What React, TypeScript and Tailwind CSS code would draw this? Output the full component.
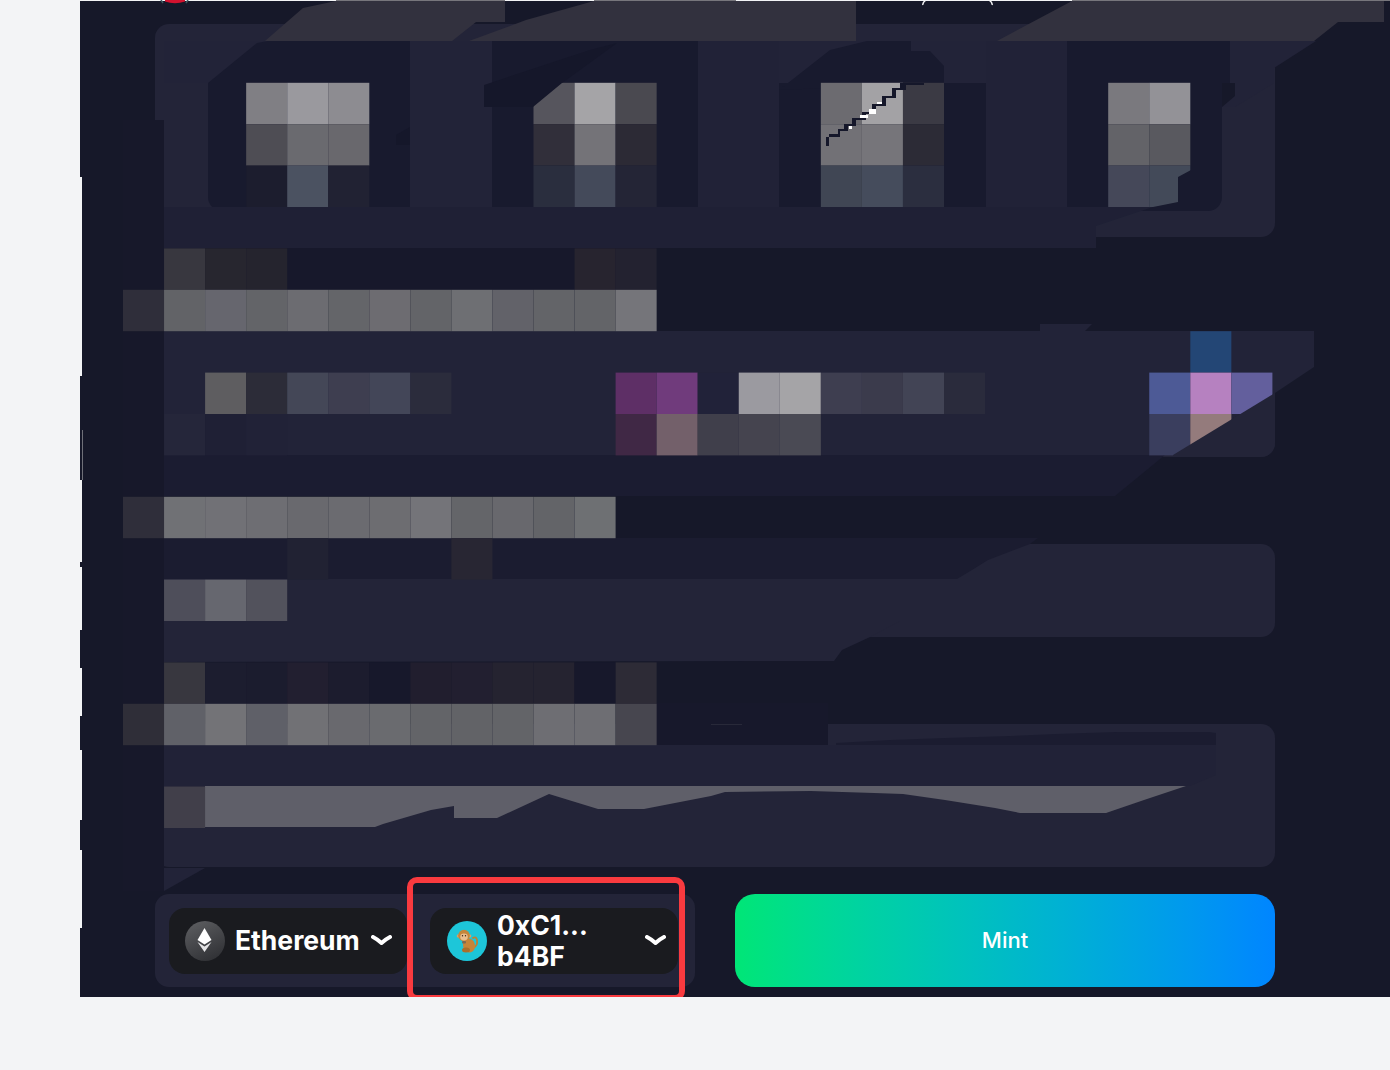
import React from "react";

const X = (i: number) => 123 + 41.05 * i;
const Y = (k: number) => 41.4 * k;

// [row, first column, ...colours]; null leaves the cell out
const rows: [number, number, ...(string | null)[]][] = [
  [2, 3, "#807f84", "#9a999e", "#8d8c91"],
  [3, 3, "#4e4d54", "#6a6a6f", "#69686d"],
  [4, 3, "#1c1d2e", "#4b5261", "#212233"],
  [2, 10, "#56555d", "#a5a4a7", "#4a4950"],
  [3, 10, "#312f3a", "#747378", "#2c2a35"],
  [4, 10, "#2a2e3e", "#444a5a", "#242536"],
  [2, 17, "#6c6b70", "#a3a2a5", "#3b3a44"],
  [3, 17, "#727176", "#76757a", "#2c2b36"],
  [4, 17, "#404654", "#454c5c", "#2b2e3f"],
  [2, 24, "#7a797e", "#939297"],
  [3, 24, "#636368", "#59595f"],
  [4, 24, "#454859", "#434a59"],
  [6, 1, "#38373f", "#27262f", "#25242e", null, null, null, null, null, null, null, "#27242f", "#232230"],
  [7, 0, "#2f2e3a", "#626367", "#66666e", "#636468", "#6c6c71", "#646569", "#6d6c71", "#636468", "#6e6f73", "#626269", "#636468", "#636468", "#75757a"],
  [8, 26, "#234675"],
  [9, 2, "#5e5d60", "#2c2c38", "#444757", "#3e3e50", "#434658", "#2b2c3c", null, null, null, null, "#5e2f66", "#703b7c", "#212239", "#9b9aa0", "#a5a4a7", "#3e3e50", "#3b3b4c", "#424455", "#2a2b3c"],
  [9, 25, "#4d5a96", "#b681c0", "#635f9d"],
  [10, 1, "#25263a", "#1f2035", "#212237", null, null, null, null, null, null, null, null, "#402845", "#73606a", "#403f4b", "#45444f", "#4a4a54"],
  [10, 25, "#3a3e5e", "#947b7c"],
  [12, 0, "#2f2e3a", "#707175", "#717176", "#6e6e73", "#69696e", "#6b6b70", "#6d6d71", "#747479", "#646569", "#68686d", "#636468", "#6e7073"],
  [13, 4, "#212233", null, null, null, "#282633"],
  [14, 1, "#4e4e5a", "#66676f", "#52525c"],
  [16, 1, "#38373f", "#1c1d2f", "#1b1c2e", "#221f30", "#1c1c2e", "#17182b", "#211e2e", "#221f30", "#252330", "#252330", "#17182b", "#2d2b36"],
  [17, 0, "#2f2e38", "#606168", "#737377", "#5f6068", "#717175", "#69696e", "#6a6b6f", "#636468", "#626367", "#636468", "#6e6e73", "#6e6e73", "#47464f"],
  [19, 1, "#413f4a"],
];

const Mosaic = () => (
  <svg className="absolute left-0 top-0 pointer-events-none" width={1310} height={997} viewBox="80 0 1310 997">
    {/* cut-off top of the page */}
    <rect x="80" y="0" width="1310" height="1" fill="#f3f4f6" />
    <rect x="336" y="0" width="169" height="1" fill="#77767c" />
    <rect x="594" y="0" width="142" height="1" fill="#77767c" />
    <rect x="1072" y="0" width="318" height="1" fill="#77767c" />
    <path d="M165 1.5 Q175 5 185 1.5 L185 0 L165 0 Z" fill="#d3122f" />
    <path d="M161 0 L163 3 M188 0 L186 3" stroke="#3d5a62" strokeWidth="1.5" />
    <path d="M926 0 Q922 3 923 5 M989 0 Q993 3 992 5" stroke="#f3f4f6" strokeWidth="1.5" fill="none" />
    <rect x="808" y="0" width="2" height="2" fill="#f3f4f6" />

    {/* panel's left edge showing through */}
    {[[177, 199], [480, 82], [567, 63], [668, 48], [750, 70], [850, 78]].map(([y, h]) => (
      <rect key={y} x="80" y={y} width="2" height={h} fill="#f3f4f6" />
    ))}
    <rect x="82" y="430" width="1" height="50" fill="#6f7079" />

    {/* band of row one and the left column */}
    <polygon points="257,41 1316,41 1274,68 1274,83 1235,107 1222,107 1222,83 164,83 164,41" fill="#222338" />
    <polygon points="257,43 268,41 410,41 410,83 208,83" fill="#181a2e" />
    <rect x="492" y="41" width="206" height="42" fill="#181a2e" />
    <rect x="1067" y="41" width="163" height="42" fill="#181a2e" />
    <polygon points="779,90 830,50 867,41 911,41 911,51 930,51 944,66 944,83" fill="#181a2e" />
    <polygon points="1222,83 1235,83 1235,96 1222,107" fill="#161829" />
    <rect x="410" y="41" width="82" height="166" fill="#222338" />
    <rect x="698" y="41" width="81" height="166" fill="#212237" />
    <rect x="986" y="41" width="81" height="166" fill="#212237" />
    <rect x="123" y="120" width="41" height="771" fill="#17182a" />

    {/* top band */}
    <polygon points="265,41 303,8 336,1 505,1 505,22 476,22 452,41" fill="#32313e" />
    <polygon points="469,41 526,20 594,1 856,1 856,41" fill="#32313e" />
    <polygon points="997,41 1072,1 1384,1 1384,22 1338,22 1314,41" fill="#32313e" />

    {/* flat bands */}
    <polygon points="164,207 1153,207 1096,226 1096,248 164,248" fill="#1f2035" />
    <rect x="164" y="248" width="492" height="42" fill="#17182b" />
    <polygon points="164,331 1040,331 1040,324 1092,324 1085,331 1314,331 1314,367 1275,393 1173,455 164,457" fill="#222338" />
    <polygon points="164,455 1165,455 1115,496 164,496" fill="#1b1c31" />
    <polygon points="164,538 1038,538 1030,544 988,560 972,570 957,579 164,579" fill="#1b1c30" />
    <polygon points="164,621 900,621 870,637 842,650 834,661 164,662" fill="#232438" />
    <rect x="656" y="703" width="172" height="42" fill="#17182b" />
    <rect x="711" y="724" width="31" height="1" fill="#282939" />
    <polygon points="836,745 836,743 891,740 945,738 1010,736 1056,734 1117,732 1209,732 1216,733 1216,745" fill="#1b1c30" />
    <polygon points="164,745 1216,745 1216,775 1190,786 164,786" fill="#212237" />
    <polygon points="205,786 1186,786 1144,800 1106,813 1020,813 995,808 945,800 903,794 874,793 811,791 725,792 711,796 644,809 598,809 549,794 497,818 454,818 454,806 431,810 383,824 375,827 205,827" fill="#5f5f69" />
    <polygon points="164,868 205,868 164,891" fill="#222338" />

    {/* cells */}
    {rows.map(([k, first, ...colours]) =>
      colours.map((c, n) =>
        c ? (
          <rect key={`${k}-${first + n}`} x={X(first + n)} y={Y(k)} width={41.05} height={41.4} fill={c} />
        ) : null
      )
    )}

    {/* diagonal tears */}
    <polygon points="484,87 484,107 533,107 562,83 617,43 590,50 484,85" fill="#15172a" />
    <polygon points="396,145 396,135 410,127 410,145" fill="#15172a" />
    <polygon points="1191,170 1178,177 1178,202 1153,207 1191,207" fill="#181a2e" />
    <path d="M1275 393 L1173 455 L1173 457 L1261 457 A14 14 0 0 0 1275 443 Z" fill="#232438" />
    <path d="M826 146 V137 H840 V131 H848 V126 H856 V120 H866 V114 H876 V106 H886 V98 H896 V90 H906 V85 H924 V83 H900 V88 H892 V96 H882 V104 H872 V112 H862 V118 H852 V124 H844 V129 H838 V134 H829 V146 Z" fill="#15172a" />
    <rect x="849" y="126" width="3" height="3" fill="#ffffff" />
    <rect x="860" y="115" width="8" height="3" fill="#ffffff" />
    <rect x="869" y="109" width="7" height="5" fill="#ffffff" />
    <rect x="877" y="102" width="5" height="2" fill="#ffffff" />
  </svg>
);

const Chevron = () => (
  <svg width="21" height="11" viewBox="0 0 21 11" className="shrink-0">
    <path d="M2 2 Q6 4 10.500 8 Q15 4 19 2" fill="none" stroke="#ffffff" strokeWidth="4" strokeLinecap="round" strokeLinejoin="round" />
  </svg>
);

const EthIcon = () => (
  <svg width="40" height="40" viewBox="0 0 40 40" className="shrink-0">
    <defs>
      <linearGradient id="eth" x1="0.2" y1="0" x2="0.7" y2="1">
        <stop offset="0" stopColor="#5c5d60" />
        <stop offset="1" stopColor="#303135" />
      </linearGradient>
    </defs>
    <circle cx="20" cy="20" r="20" fill="url(#eth)" />
    <polygon points="19.500,7 26.500,19 19.500,23.500 12.500,19" fill="#ffffff" />
    <polygon points="12.500,21 19.500,25.500 26.500,21 19.500,31" fill="#e4e4e6" />
  </svg>
);

const MonkeyIcon = () => (
  <svg width="40" height="40" viewBox="0 0 40 40" className="shrink-0">
    <circle cx="20" cy="20" r="20" fill="#1dc6d9" />
    <path d="M26 27 Q31 25 30 19 Q29 15 26 17" fill="none" stroke="#bf7f32" strokeWidth="1.800" strokeLinecap="round" />
    <ellipse cx="22" cy="24.500" rx="6" ry="7" fill="#c5853a" transform="rotate(-15 22 24.500)" />
    <ellipse cx="19" cy="29" rx="4" ry="2.500" fill="#a96f2c" />
    <circle cx="11.500" cy="15" r="1.800" fill="#d9a066" />
    <circle cx="22.500" cy="15" r="1.800" fill="#d9a066" />
    <circle cx="17" cy="14.500" r="5.800" fill="#c5853a" />
    <ellipse cx="17" cy="16" rx="3.800" ry="3.400" fill="#e9bd8f" />
    <circle cx="15.500" cy="14.800" r="0.700" fill="#3a2412" />
    <circle cx="18.500" cy="14.800" r="0.700" fill="#3a2412" />
    <rect x="15" y="20" width="4" height="2.500" rx="1" fill="#7a6a55" />
  </svg>
);

export default function App() {
  return (
    <div className="h-[1070px] w-[1390px] overflow-hidden bg-[#f3f4f6] pl-[80px] font-['Inter',sans-serif]">
      <div className="relative h-[997px] w-[1310px] overflow-hidden bg-[#161829] pl-[75px] pt-[24px]">
        <div className="h-[213px] w-[1120px] rounded-[14px] bg-[#232438] pl-[53px] pt-[28px]">
          <div className="h-[159px] w-[1014px] rounded-[14px] bg-[#181a2e]" />
        </div>
        <div className="mt-[94px] h-[126px] w-[1120px] rounded-[14px] bg-[#232438]" />
        <div className="mt-[87px] h-[93px] w-[1120px] rounded-[14px] bg-[#232438]" />
        <div className="mt-[87px] h-[143px] w-[1120px] rounded-[14px] bg-[#232438]" />

        <Mosaic />

        <div className="relative mt-[27px] flex h-[93px] w-[1120px] gap-[40px]">
          <div className="flex h-full w-[540px] items-center gap-[23px] rounded-[14px] bg-[#232438] pl-[14px]">
            <button className="flex h-[66px] w-[238px] items-center rounded-[16px] bg-[#1a1b1f] pl-[16px] text-white">
              <EthIcon />
              <span className="ml-[10px] text-[26.500px] font-bold leading-[31px]">Ethereum</span>
              <span className="ml-[11px]">
                <Chevron />
              </span>
            </button>
            <button className="flex h-[66px] w-[248px] items-center rounded-[16px] bg-[#1a1b1f] pl-[17px] text-left text-white">
              <MonkeyIcon />
              <span className="ml-[10px] w-[148px] text-[26.500px] font-bold leading-[31px]">
                0xC1...
                <br />
                b4BF
              </span>
              <Chevron />
            </button>
          </div>
          <button className="flex h-full w-[540px] items-center justify-center rounded-[20px] bg-gradient-to-r from-[#00e676] to-[#0085ff] text-[22px] font-medium text-white">
            Mint
          </button>
        </div>

        <div className="absolute left-[327px] top-[877px] h-[124px] w-[278px] rounded-[10px] border-[6px] border-[#f93a3f]" />
      </div>
    </div>
  );
}
